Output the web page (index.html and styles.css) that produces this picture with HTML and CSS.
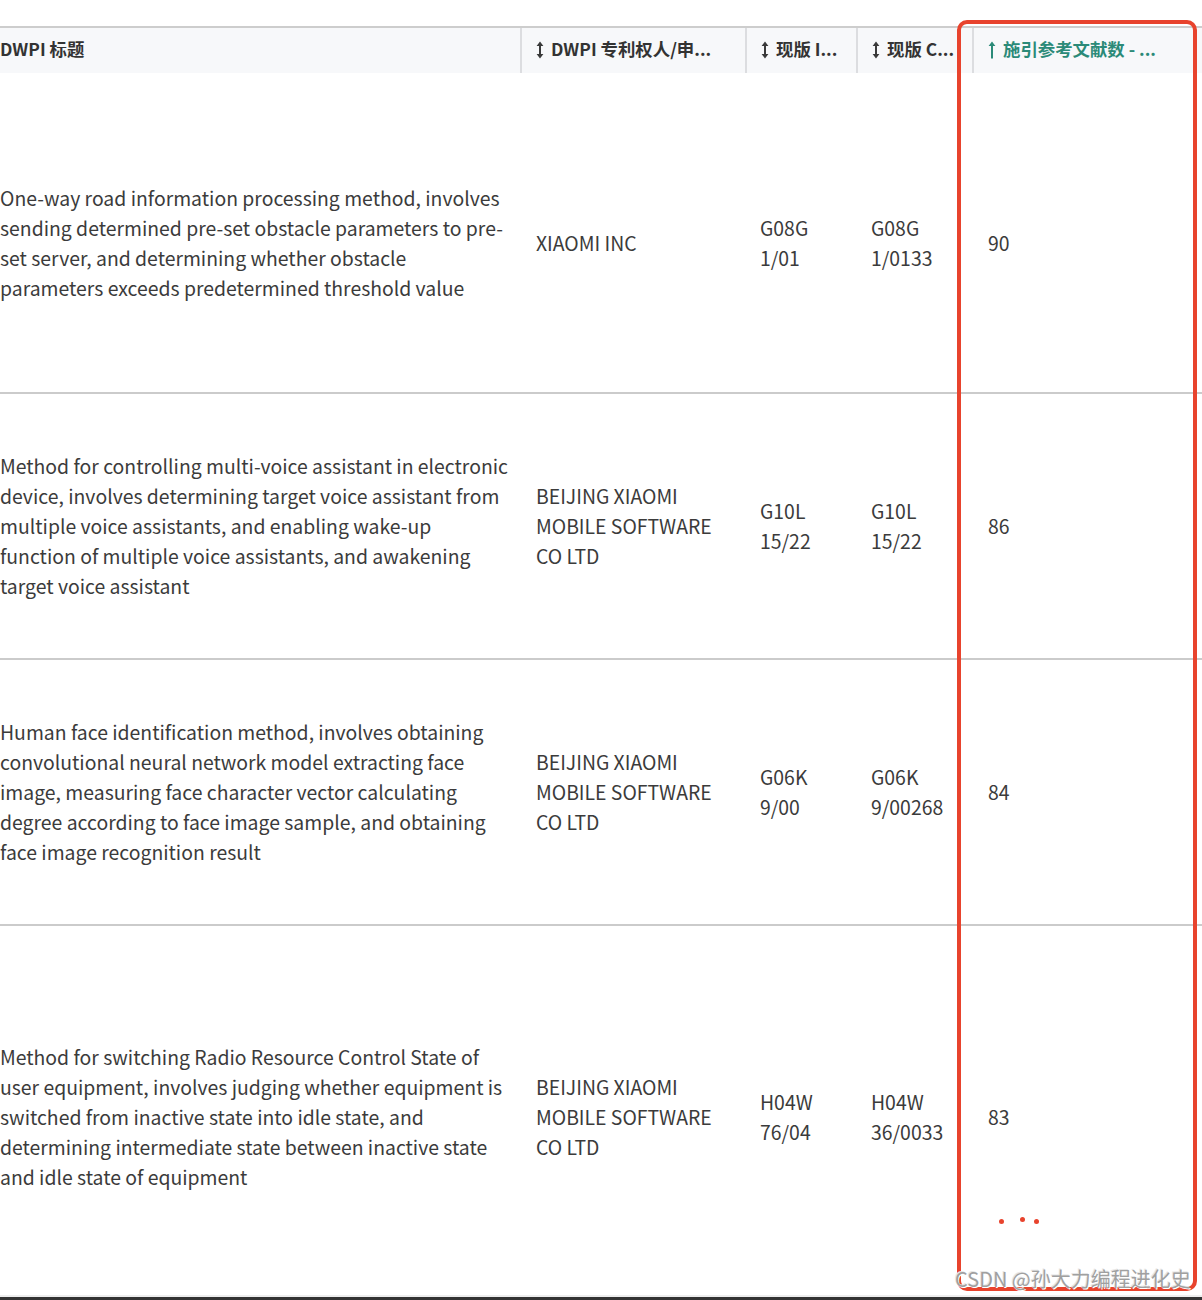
FILE: index.html
```html
<!DOCTYPE html>
<html lang="zh-CN">
<head>
<meta charset="utf-8">
<title>DWPI</title>
<link rel="stylesheet" href="styles.css">
</head>
<body>
<div class="page">
  <div class="table">
    <div class="row head">
      <div class="cell c1 h">DWPI 标题</div>
      <div class="cell c2 h"><svg class="sort" viewBox="0 0 8 18"><path d="M4 0.5 L0.6 5 H3 V13 H0.6 L4 17.5 L7.4 13 H5 V5 H7.4 Z"/></svg>DWPI 专利权人/申...</div>
      <div class="cell c3 h"><svg class="sort" viewBox="0 0 8 18"><path d="M4 0.5 L0.6 5 H3 V13 H0.6 L4 17.5 L7.4 13 H5 V5 H7.4 Z"/></svg>现版 I...</div>
      <div class="cell c4 h"><svg class="sort" viewBox="0 0 8 18"><path d="M4 0.5 L0.6 5 H3 V13 H0.6 L4 17.5 L7.4 13 H5 V5 H7.4 Z"/></svg>现版 C...</div>
      <div class="cell c5 h active"><svg class="sort" viewBox="0 0 8 18"><path d="M4 0.5 L0.6 5 H3 V17.5 H5 V5 H7.4 Z"/></svg>施引参考文献数 - ...</div>
    </div>
    <div class="row body r1">
      <div class="cell c1">One-way road information processing method, involves sending determined pre-set obstacle parameters to pre-set server, and determining whether obstacle parameters exceeds predetermined threshold value</div>
      <div class="cell c2">XIAOMI INC</div>
      <div class="cell c3">G08G 1/01</div>
      <div class="cell c4">G08G 1/0133</div>
      <div class="cell c5">90</div>
    </div>
    <div class="row body r2">
      <div class="cell c1">Method for controlling multi-voice assistant in electronic device, involves determining target voice assistant from multiple voice assistants, and enabling wake-up function of multiple voice assistants, and awakening target voice assistant</div>
      <div class="cell c2">BEIJING XIAOMI MOBILE SOFTWARE CO LTD</div>
      <div class="cell c3">G10L 15/22</div>
      <div class="cell c4">G10L 15/22</div>
      <div class="cell c5">86</div>
    </div>
    <div class="row body r3">
      <div class="cell c1">Human face identification method, involves obtaining convolutional neural network model extracting face image, measuring face character vector calculating degree according to face image sample, and obtaining face image recognition result</div>
      <div class="cell c2">BEIJING XIAOMI MOBILE SOFTWARE CO LTD</div>
      <div class="cell c3">G06K 9/00</div>
      <div class="cell c4">G06K 9/00268</div>
      <div class="cell c5">84</div>
    </div>
    <div class="row body r4">
      <div class="cell c1">Method for switching Radio Resource Control State of user equipment, involves judging whether equipment is switched from inactive state into idle state, and determining intermediate state between inactive state and idle state of equipment</div>
      <div class="cell c2">BEIJING XIAOMI MOBILE SOFTWARE CO LTD</div>
      <div class="cell c3">H04W 76/04</div>
      <div class="cell c4">H04W 36/0033</div>
      <div class="cell c5">83</div>
    </div>
    <div class="bottom-bar"></div>
  </div>

  <div class="highlight"></div>
  <span class="dot d1"></span>
  <span class="dot d2"></span>
  <span class="dot d3"></span>
  <div class="watermark">CSDN @孙大力编程进化史</div>
</div>
</body>
</html>
```

FILE: styles.css
```css
* { box-sizing: border-box; }

html, body {
  margin: 0;
  padding: 0;
  background: #ffffff;
}

.page {
  position: relative;
  width: 1202px;
  height: 1300px;
  overflow: hidden;
  padding-top: 26px;
  font-family: "Noto Sans CJK SC", "Source Sans Pro", sans-serif;
  color: #3b3b3b;
}

.table {
  margin-left: -2px;
  width: 1204px;
  display: flex;
  flex-direction: column;
}

.row {
  display: grid;
  grid-template-columns: 522px 225px 111px 116px 230px;
}

.head {
  border-top: 2px solid #cdcdcd;
  height: 47px;
  background: #f7f8fa;
}

.cell.h {
  display: flex;
  align-items: center;
  gap: 7px;
  font-size: 17.4px;
  font-weight: 700;
  color: #333333;
  white-space: nowrap;
  padding: 0 0 4px 14px;
  border-left: 2px solid #dcdde0;
}

.cell.h .sort {
  margin-top: 2px;
}

.cell.h.c1 {
  border-left: none;
  padding-left: 2px;
}

.cell.h.active {
  color: #2b8a78;
}

.sort {
  width: 8px;
  height: 18px;
  fill: #3a3a3a;
  flex: none;
}

.active .sort {
  fill: #2b8a78;
}

.body {
  align-items: center;
  border-bottom: 2px solid #cbcbcb;
  font-size: 19.4px;
  line-height: 30px;
}

.body .cell {
  padding: 0 15px 0 16px;
}

.body .c1 {
  padding-left: 2px;
  padding-right: 12px;
}

.body .c3,
.body .c4 {
  padding-left: 15px;
  padding-right: 12px;
}

.r1 { height: 321px; padding-top: 21px; }
.r2 { height: 266px; }
.r3 { height: 266px; }
.r4 { height: 371px; padding-top: 12px; border-bottom-color: #eeeeee; }

.bottom-bar {
  height: 6px;
  background: #333333;
}

.highlight {
  position: absolute;
  left: 957px;
  top: 20px;
  width: 240px;
  height: 1271px;
  border: 4px solid #e8432d;
  border-radius: 10px;
}

.dot {
  position: absolute;
  width: 5px;
  height: 5px;
  border-radius: 50%;
  background: #e8432d;
}

.d1 { left: 999px; top: 1219px; }
.d2 { left: 1020px; top: 1217px; }
.d3 { left: 1034px; top: 1219px; }

.watermark {
  position: absolute;
  left: 955px;
  top: 1266px;
  font-family: "Noto Sans CJK SC", sans-serif;
  font-size: 20px;
  line-height: 26px;
  color: #a0a0a0;
  text-shadow: 1px 1px 0 #ffffff, -1px -1px 0 #e6e6e6;
  white-space: nowrap;
}
```
